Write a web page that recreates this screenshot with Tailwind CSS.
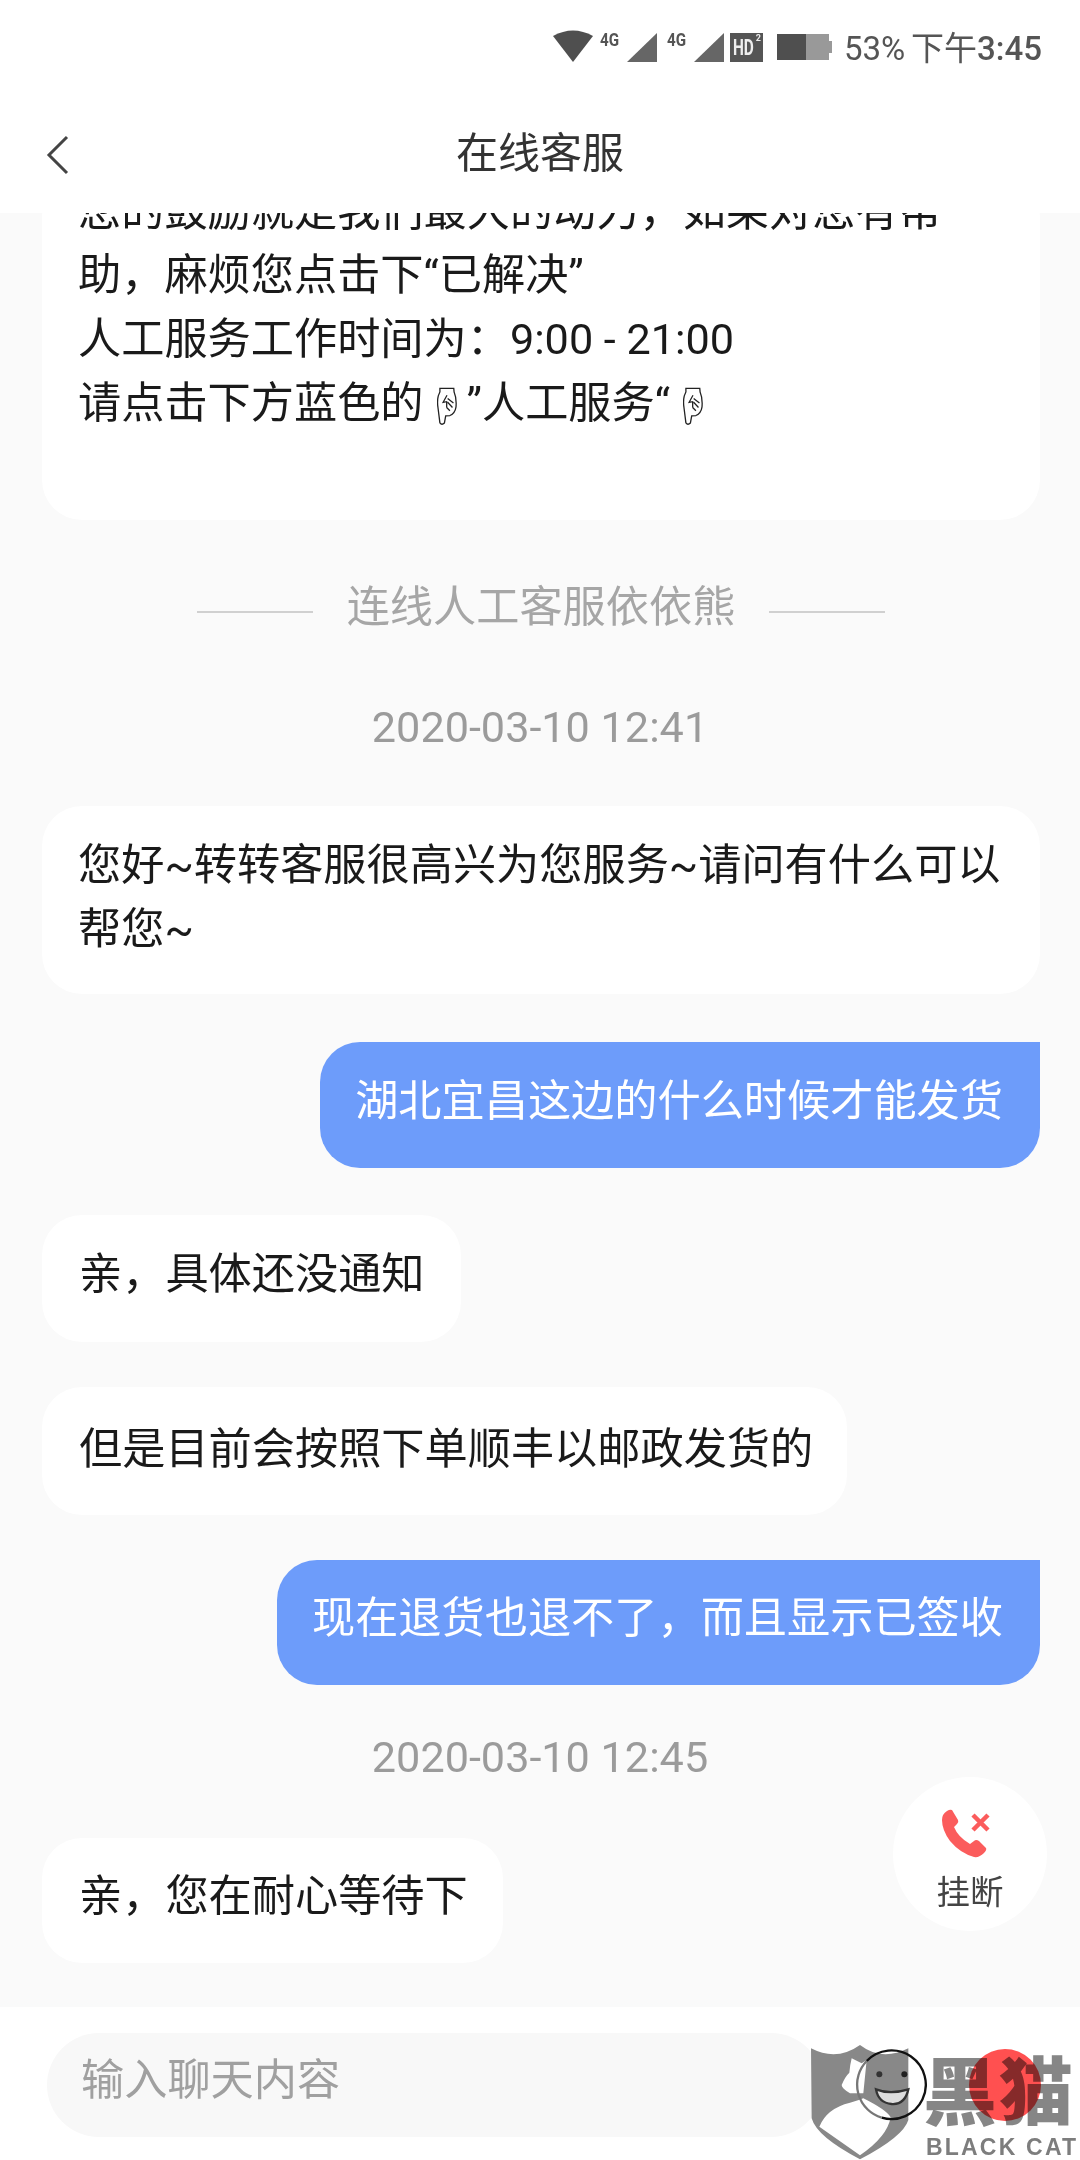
<!DOCTYPE html>
<html lang="zh">
<head>
  <meta charset="UTF-8" />
  <title>在线客服</title>
  <script src="https://cdn.jsdelivr.net/npm/@tailwindcss/browser@4"></script>
</head>
<body class="font-['Roboto','Noto_Sans_CJK_SC',sans-serif]">
<div class="relative w-[1080px] h-[2160px] overflow-hidden flex flex-col bg-white text-[43.2px] leading-[64px] text-[#1a1a1a]">

  <!-- status bar -->
  <div class="h-[90px] shrink-0 relative text-[#555]">
    <svg class="absolute left-[553px] top-[29px]" width="40" height="33" viewBox="0 0 40 33"><path d="M0 7 Q20 -4 40 7 L20 33 Z" fill="#4f4f4f"/></svg>
    <span class="absolute left-[600px] top-[30px] text-[19px] leading-[19px] font-bold scale-x-80 origin-left">4G</span>
    <svg class="absolute left-[626px] top-[33px]" width="32" height="30" viewBox="0 0 32 30"><path d="M31 0 V29 H1 Z" fill="#666"/></svg>
    <span class="absolute left-[667px] top-[30px] text-[19px] leading-[19px] font-bold scale-x-80 origin-left">4G</span>
    <svg class="absolute left-[693px] top-[33px]" width="32" height="30" viewBox="0 0 32 30"><path d="M31 0 V29 H1 Z" fill="#666"/></svg>
    <div class="absolute left-[730px] top-[33px] w-[33px] h-[29px] bg-[#555] text-[#eee] text-[22px] leading-[29px] font-bold pl-[3px] whitespace-nowrap"><span class="inline-block scale-x-70 origin-left">HD</span><span class="absolute right-[2px] top-[-9px] text-[9px]">2</span></div>
    <div class="absolute left-[777px] top-[34px] w-[55px] h-[26px] flex items-center">
      <div class="w-[29px] h-full bg-[#4f4f4f]"></div>
      <div class="w-[23px] h-full bg-[#999]"></div>
      <div class="w-[3px] h-[12px] bg-[#999]"></div>
    </div>
    <span class="absolute left-[844px] top-[29px] text-[33px] leading-[40px]">53%</span>
    <span class="absolute left-[911px] top-[29px] text-[33px] leading-[40px]">下午<span class="font-medium">3:45</span></span>
  </div>

  <!-- title bar -->
  <div class="h-[123px] shrink-0 relative flex items-center justify-center text-[#333] text-[42px]">
    <svg class="absolute left-[46px] top-[45px]" width="24" height="40" viewBox="0 0 24 40"><path d="M21 2 L3 20 L21 38" fill="none" stroke="#444" stroke-width="3"/></svg>
    <span class="mt-[4px]">在线客服</span>
  </div>

  <!-- messages -->
  <div class="flex-1 bg-[#fafafa] overflow-hidden pl-[42px] relative">
    <div class="-mt-[35px] bg-white rounded-[40px] w-[998px] pl-[36px] pr-[58px] pt-[2px] h-[342px]">
      <p>您的鼓励就是我们最大的动力，如果对您有帮助，麻烦您点击下“已解决”</p>
      <p>人工服务工作时间为：9:00 - 21:00</p>
      <p class="flex items-center whitespace-nowrap">请点击下方蓝色的<svg class="ml-[13px] mr-[10px] mt-[4px]" width="20" height="39" viewBox="0 0 62 118"><path d="M9 3 H52 L53 14 Q61 32 59 60 Q56 80 40 87 L27 88 L23 110 Q15 118 9 110 L3 62 Q0 42 4 26 L9 14 Z" fill="#fff" stroke="#222" stroke-width="4"/><path d="M31 24 L19 46 L30 44 L30 62 M33 34 L51 48 M33 46 L48 62 M30 62 L40 72" fill="none" stroke="#222" stroke-width="4"/></svg>”人工服务“<svg class="ml-[13px] mt-[4px]" width="20" height="39" viewBox="0 0 62 118"><path d="M9 3 H52 L53 14 Q61 32 59 60 Q56 80 40 87 L27 88 L23 110 Q15 118 9 110 L3 62 Q0 42 4 26 L9 14 Z" fill="#fff" stroke="#222" stroke-width="4"/><path d="M31 24 L19 46 L30 44 L30 62 M33 34 L51 48 M33 46 L48 62 M30 62 L40 72" fill="none" stroke="#222" stroke-width="4"/></svg></p>
    </div>

    <div class="flex items-center justify-center gap-[34px] mt-[58px] h-[60px] text-[#a6a6a6] w-[998px]">
      <div class="w-[116px] h-[2px] bg-[#d0d0d0] mt-[8px]"></div>
      <span>连线人工客服依依熊</span>
      <div class="w-[116px] h-[2px] bg-[#d0d0d0] mt-[8px]"></div>
    </div>
    <div class="text-center text-[#9b9b9b] leading-[60px] mt-[60px] w-[996px]">2020-03-10 12:41</div>

    <div class="mt-[48px] bg-white rounded-[40px] w-[998px] pl-[36px] pr-[30px] pt-[28px] pb-[32px]">您好~转转客服很高兴为您服务~请问有什么可以帮您~</div>

    <div class="flex justify-end mt-[48px] pr-[40px]">
      <div class="bg-[#6d9cfa] text-white rounded-[40px] rounded-tr-none pl-[35px] pr-[37px] pb-[7px] h-[126px] flex items-center">湖北宜昌这边的什么时候才能发货</div>
    </div>

    <div class="flex mt-[47px]">
      <div class="bg-white rounded-[40px] pl-[37px] pr-[36px] pb-[7px] h-[127px] flex items-center">亲，具体还没通知</div>
    </div>
    <div class="flex mt-[45px]">
      <div class="bg-white rounded-[40px] pl-[37px] pr-[34px] pb-[3px] h-[128px] flex items-center">但是目前会按照下单顺丰以邮政发货的</div>
    </div>

    <div class="flex justify-end mt-[45px] pr-[40px]">
      <div class="bg-[#6d9cfa] text-white rounded-[40px] rounded-tr-none pl-[35px] pr-[37px] pb-[7px] h-[125px] flex items-center">现在退货也退不了，而且显示已签收</div>
    </div>

    <div class="text-center text-[#9b9b9b] leading-[60px] mt-[43px] w-[996px]">2020-03-10 12:45</div>

    <div class="flex mt-[50px]">
      <div class="bg-white rounded-[40px] pl-[37px] pr-[35px] pb-[7px] h-[125px] flex items-center">亲，您在耐心等待下</div>
    </div>

    <!-- hang up button -->
    <div class="absolute left-[893px] top-[1564px] w-[154px] h-[154px] rounded-full bg-white flex flex-col items-center text-[#444] text-[33.5px] leading-[40px]">
      <svg class="mt-[31px] -ml-[8px]" width="48" height="50" viewBox="0 0 48 50">
        <path d="M10 2 L16 12 Q17 14 15 16 L12 19 Q16 29 28 36 L32 33 Q34 31 37 33 L44 40 Q45 42 42 45 Q37 50 32 49 Q18 45 8 33 Q0 22 0 12 Q0 6 5 3 Q8 1 10 2 Z" fill="#fb5c5c"/>
        <path d="M31 7 L46 22 M46 7 L31 22" stroke="#fb5c5c" stroke-width="4.5" fill="none"/>
      </svg>
      <span class="mt-[15px]">挂断</span>
    </div>
  </div>

  <!-- input bar -->
  <div class="h-[153px] shrink-0 bg-white pt-[26px] pl-[47px]">
    <div class="w-[776px] h-[104px] rounded-full bg-[#f8f8f8] pl-[34px] pb-[8px] flex items-center text-[#a0a0a0]">输入聊天内容</div>
  </div>

  <!-- watermark -->
  <div class="absolute left-[811px] top-[2045px] w-[269px] h-[115px]">
    <span class="absolute left-[112px] top-[4px] text-[#868686] text-[74px] leading-[90px] font-black tracking-[2px]">黑猫</span>
    <div class="absolute left-[158px] top-[4px] w-[72px] h-[72px] rounded-full bg-[#ff5050] mix-blend-multiply"></div>
    <svg class="absolute left-0 top-0" width="116" height="115" viewBox="33 45 348 345">
      <path d="M33 55 Q110 95 180 45 Q245 95 325 55 V270 Q310 320 180 388 Q50 320 35 265 Z" fill="#888"/>
      <path d="M58 290 Q80 235 150 218 Q175 212 190 205 Q260 240 272 262 Q262 320 180 376 Z" fill="#fff"/>
      <path d="M155 85 L185 100 L200 90 L190 190 L150 190 Q125 175 125 165 Q135 140 148 128 Q150 105 155 85 Z" fill="#fff"/>
      <path d="M200 93 A103 103 0 1 1 245 263" fill="none" stroke="#111" stroke-width="7"/>
      <path d="M245 263 A103 103 0 0 1 200 93" fill="none" stroke="#777" stroke-width="7"/>
      <circle cx="238" cy="133" r="9" fill="#333"/><circle cx="313" cy="133" r="9" fill="#222"/>
      <path d="M228 178 Q270 195 325 178 Q315 225 275 222 Q235 218 228 178 Z" fill="#ddd" stroke="#333" stroke-width="7"/>
    </svg>
    <span class="absolute left-[115px] top-[90px] text-[#7d7d7d] text-[23px] leading-[24px] font-bold tracking-[2.2px] whitespace-nowrap font-['Liberation_Sans']">BLACK CAT</span>
  </div>
</div>
</body>
</html>
